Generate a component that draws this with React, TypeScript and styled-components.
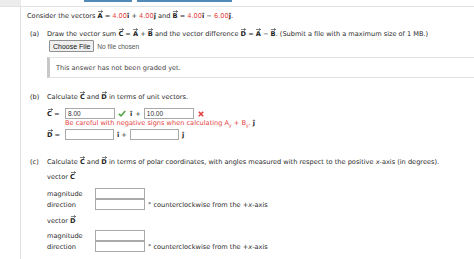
import React from "react";
import styled, { createGlobalStyle } from "styled-components";

const Global = createGlobalStyle`
  html, body { margin: 0; padding: 0; background: #fff; }
  body { font-family: "DejaVu Sans", Verdana, sans-serif; font-size: 6.6px; color: #2a2a2a; }
`;

const TopBar = styled.div`
  height: 6px;
  border-bottom: 1px solid #e3e3e3;
  display: flex;
  align-items: flex-start;
  background: linear-gradient(to right, #ececec 0, #ececec 21px, #fff 21px);
`;

const Tab = styled.div<{ $w: number; $ml: number }>`
  width: ${(p) => p.$w}px;
  margin-left: ${(p) => p.$ml}px;
  height: 2px;
  background: #4f8ab9;
`;

const Main = styled.div`
  display: flex;
  height: 252px;
`;

const Gutter = styled.div`
  width: 20px;
  flex: none;
`;

const Content = styled.div`
  flex: 1;
  border-left: 1px solid #e0e0e0;
  padding: 5px 0 0 6px;
`;

const Line = styled.div<{ $mt?: number }>`
  line-height: 9px;
  height: 9px;
  white-space: nowrap;
  margin-top: ${(p) => p.$mt ?? 0}px;
`;

const Red = styled.span`
  color: #e2403e;
`;

const VecWrap = styled.span`
  position: relative;
  display: inline-block;
  font-weight: bold;
  color: #222;
`;

const ArrowSvg = styled.svg`
  position: absolute;
  left: 0.5px;
  top: -2px;
`;

const Vec = ({ l }: { l: string }) => (
  <VecWrap>
    {l}
    <ArrowSvg width="5" height="3" viewBox="0 0 5 3">
      <path d="M0 1.5H4.6M3 0.3L4.6 1.5L3 2.7" stroke="#333" strokeWidth="0.6" fill="none" />
    </ArrowSvg>
  </VecWrap>
);

const Unit = styled.b`
  font-weight: bold;
  color: #222;
`;

const Part = styled.div<{ $mt: number }>`
  display: grid;
  grid-template-columns: 20px 1fr;
  margin-top: ${(p) => p.$mt}px;
`;

const Label = styled.div`
  padding-left: 3px;
  line-height: 9px;
  height: 9px;
`;

const Body = styled.div`
  display: flex;
  flex-direction: column;
  align-items: flex-start;
`;

const FileRow = styled.div`
  display: flex;
  align-items: center;
  gap: 3px;
  margin-top: 1px;
  margin-left: 2px;
  height: 12px;
  color: #555;
  font-family: "Liberation Sans", Arial, sans-serif;
  font-size: 6.6px;
`;

const FileButton = styled.div`
  height: 12px;
  box-sizing: border-box;
  padding: 0 3px;
  display: flex;
  align-items: center;
  border: 1px solid #8f8f8f;
  border-radius: 1px;
  background: #efefef;
  color: #111;
  font-size: 7px;
`;

const Graded = styled.div`
  margin-top: 5px;
  margin-left: 0;
  align-self: stretch;
  height: 21px;
  box-sizing: border-box;
  border: 1px solid #e2e2e2;
  border-left: 3px solid #c8c8c8;
  border-right: none;
  display: flex;
  align-items: center;
  padding-left: 6px;
  color: #444;
`;

const EqRow = styled.div<{ $mt?: number }>`
  display: flex;
  align-items: center;
  height: 11px;
  margin-top: ${(p) => p.$mt ?? 0}px;
  white-space: nowrap;
`;

const EqLabel = styled.span`
  width: 18px;
  flex: none;
`;

const Input = styled.div<{ $w?: number }>`
  width: ${(p) => p.$w ?? 50}px;
  height: 11px;
  box-sizing: border-box;
  border: 1px solid #a9a9a9;
  background: #fff;
  font-family: "Liberation Sans", Arial, sans-serif;
  font-size: 6.5px;
  line-height: 9px;
  padding-left: 2px;
  color: #333;
  flex: none;
`;

const Check = styled.svg`
  margin: 0 4px 0 3px;
  flex: none;
`;

const Cross = styled.svg`
  margin-left: 4px;
  flex: none;
`;

const Sep = styled.span`
  margin: 0 3px 0 3px;
`;

const Note = styled.div`
  color: #e2403e;
  line-height: 8px;
  height: 8px;
  margin-left: 18px;
  white-space: nowrap;
`;

const Sub = styled.sub`
  font-size: 4.5px;
  line-height: 0;
`;

const Field = styled.div<{ $mt?: number }>`
  display: flex;
  align-items: center;
  height: 11px;
  margin-top: ${(p) => p.$mt ?? 0}px;
  white-space: nowrap;
`;

const FieldName = styled.span`
  width: 48px;
  flex: none;
`;

const Unit2 = styled.span`
  margin-left: 3px;
`;

const CheckIcon = () => (
  <Check width="8" height="7" viewBox="0 0 8 7">
    <path d="M0.8 3.8L3 5.8L7.3 1" stroke="#5aa84a" strokeWidth="1.7" fill="none" />
  </Check>
);

const CrossIcon = () => (
  <Cross width="6" height="6" viewBox="0 0 6 6">
    <path d="M0.8 0.8L5.2 5.2M5.2 0.8L0.8 5.2" stroke="#e2403e" strokeWidth="1.6" />
  </Cross>
);

export default function App() {
  return (
    <>
      <Global />
      <TopBar>
        <Tab $ml={84} $w={48} />
        <Tab $ml={5} $w={95} />
      </TopBar>
      <Main>
        <Gutter />
        <Content>
          <Line>
            Consider the vectors <Vec l="A" /> = <Red>4.00</Red>
            <Unit>î</Unit> + <Red>4.00</Red>
            <Unit>ĵ</Unit> and <Vec l="B" /> = <Red>4.00</Red>
            <Unit>î</Unit> − <Red>6.00</Red>
            <Unit>ĵ</Unit>.
          </Line>

          <Part $mt={9}>
            <Label>(a)</Label>
            <Body>
              <Line>
                Draw the vector sum <Vec l="C" /> = <Vec l="A" /> + <Vec l="B" /> and the vector difference{" "}
                <Vec l="D" /> = <Vec l="A" /> − <Vec l="B" />. (Submit a file with a maximum size of 1 MB.)
              </Line>
              <FileRow>
                <FileButton>Choose File</FileButton>
                <span>No file chosen</span>
              </FileRow>
              <Graded>This answer has not been graded yet.</Graded>
            </Body>
          </Part>

          <Part $mt={15}>
            <Label>(b)</Label>
            <Body>
              <Line>
                Calculate <Vec l="C" /> and <Vec l="D" /> in terms of unit vectors.
              </Line>
              <EqRow $mt={6}>
                <EqLabel>
                  <Vec l="C" /> =
                </EqLabel>
                <Input $w={50}>8.00</Input>
                <CheckIcon />
                <Unit>î</Unit>
                <Sep>+</Sep>
                <Input $w={50}>10.00</Input>
                <CrossIcon />
              </EqRow>
              <Note>
                Be careful with negative signs when calculating A<Sub>y</Sub> + B<Sub>y</Sub>.{" "}
                <Unit>ĵ</Unit>
              </Note>
              <EqRow $mt={2}>
                <EqLabel>
                  <Vec l="D" /> =
                </EqLabel>
                <Input $w={49} />
                <Sep>
                  <Unit>î</Unit> +
                </Sep>
                <Input $w={49} />
                <Unit2>
                  <Unit>ĵ</Unit>
                </Unit2>
              </EqRow>
            </Body>
          </Part>

          <Part $mt={18}>
            <Label>(c)</Label>
            <Body>
              <Line>
                Calculate <Vec l="C" /> and <Vec l="D" /> in terms of polar coordinates, with angles measured with
                respect to the positive <i>x</i>-axis (in degrees).
              </Line>
              <Line $mt={6}>
                vector <Vec l="C" />
              </Line>
              <Field $mt={6}>
                <FieldName>magnitude</FieldName>
                <Input $w={50} />
              </Field>
              <Field>
                <FieldName>direction</FieldName>
                <Input $w={50} />
                <Unit2>° counterclockwise from the +<i>x</i>-axis</Unit2>
              </Field>
              <Line $mt={7}>
                vector <Vec l="D" />
              </Line>
              <Field $mt={4}>
                <FieldName>magnitude</FieldName>
                <Input $w={50} />
              </Field>
              <Field>
                <FieldName>direction</FieldName>
                <Input $w={50} />
                <Unit2>° counterclockwise from the +<i>x</i>-axis</Unit2>
              </Field>
            </Body>
          </Part>
        </Content>
      </Main>
    </>
  );
}
